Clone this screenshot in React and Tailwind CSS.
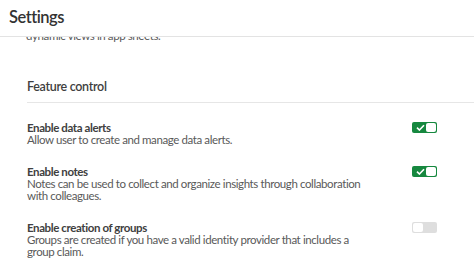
const FEATURES = [
  {
    id: "alerts",
    title: "Enable data alerts",
    desc: "Allow user to create and manage data alerts.",
    on: true,
  },
  {
    id: "notes",
    title: "Enable notes",
    desc: "Notes can be used to collect and organize insights through collaboration with colleagues.",
    on: true,
  },
  {
    id: "groups",
    title: "Enable creation of groups",
    desc: "Groups are created if you have a valid identity provider that includes a group claim.",
    on: false,
  },
];

function Toggle({ on }) {
  if (on) {
    return (
      <div className="flex h-[11px] w-[25px] items-center justify-between rounded-[2px] bg-[#16883f] p-px">
        <svg width="9" height="7" viewBox="0 0 9 7" className="ml-[3px]">
          <path d="M1 3.6 L3.4 6 L8 1.2" fill="none" stroke="white" strokeWidth="1.6" />
        </svg>
        <div className="h-full w-[10px] rounded-[2px] bg-white" />
      </div>
    );
  }
  return (
    <div className="flex h-[11px] w-[25px] items-center rounded-[2px] bg-[#dedede] p-px">
      <div className="h-full w-[10px] rounded-[2px] bg-white" />
    </div>
  );
}

export default function App() {
  return (
    <div
      className="h-[280px] w-[474px] overflow-hidden bg-white text-[#404040]"
      style={{ fontFamily: "Lato, 'Noto Sans', sans-serif" }}
    >
      <div className="h-[37px] border-b border-[#e3e3e3] bg-white">
        <h1 className="pl-[9px] pt-[5px] text-[16.5px] font-semibold leading-6 tracking-[-0.5px] text-[#333]">
          Settings
        </h1>
      </div>
      <div className="h-[5px] overflow-hidden pl-[26px] text-[11.5px] leading-4 tracking-[-0.4px] text-[#595959]">
        <div className="-mt-[9px]">dynamic views in app sheets.</div>
      </div>

      <div className="pl-[27px] pt-[35px]">
        <h2 className="border-b border-[#e6e6e6] pb-[5px] text-[12.5px] font-semibold leading-5 tracking-[-0.3px]">
          Feature control
        </h2>
        <div className="flex flex-col gap-[20px] pt-[19px]">
          {FEATURES.map((f) => (
            <div key={f.id} className="flex items-start justify-between pr-[37px]">
              <div className="w-[340px] text-[11.5px] leading-[12px] tracking-[-0.4px]">
                <p className="font-bold text-[#404040]">{f.title}</p>
                <p className="text-[#595959]">{f.desc}</p>
              </div>
              <div>
                <Toggle on={f.on} />
              </div>
            </div>
          ))}
        </div>
      </div>
    </div>
  );
}
